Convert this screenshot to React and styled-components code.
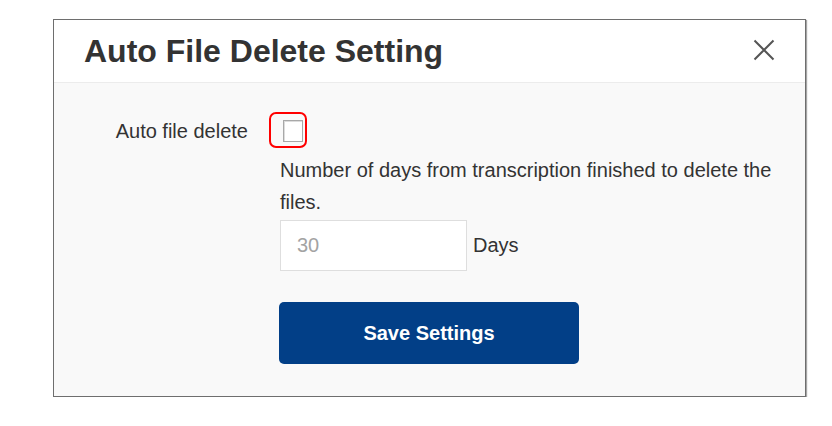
import styled, { createGlobalStyle } from 'styled-components';

const GlobalStyle = createGlobalStyle`
    html, body {
        margin: 0;
        padding: 0;
        background: #ffffff;
        font-family: "Liberation Sans", Arial, sans-serif;
    }
`;

const App = () => {
    return (
        <>
            <GlobalStyle />
            <StyledDialog>
                <StyledHeader>
                    <StyledTitle>Auto File Delete Setting</StyledTitle>
                    <StyledClose aria-label="close">
                        <svg width="22" height="22" viewBox="0 0 22 22">
                            <path d="M1.5 1.5 L20.5 20.5 M20.5 1.5 L1.5 20.5" stroke="#555" strokeWidth="2" fill="none" />
                        </svg>
                    </StyledClose>
                </StyledHeader>

                <StyledBody>
                    <StyledLabel>Auto file delete</StyledLabel>
                    <StyledField>
                        <StyledCheckRow>
                            <StyledCheckbox />
                            <StyledHighlight />
                        </StyledCheckRow>
                        <StyledHelp>
                            Number of days from transcription finished to delete the files.
                        </StyledHelp>
                        <StyledInputRow>
                            <StyledInput>30</StyledInput>
                            <StyledUnit>Days</StyledUnit>
                        </StyledInputRow>
                        <StyledSaveButton>Save Settings</StyledSaveButton>
                    </StyledField>
                </StyledBody>
            </StyledDialog>
        </>
    );
};

export default App;

const StyledDialog = styled.div`
    box-sizing: border-box;
    width: 753px;
    margin: 19px 0 0 53px;
    border: 1px solid #6e6e6e;
    box-shadow: 1px 1px 1px rgba(0, 0, 0, 0.35);
    background: #f9f9f9;
`;

const StyledHeader = styled.div`
    height: 62px;
    display: flex;
    align-items: center;
    justify-content: space-between;
    padding: 0 30px;
    background: #ffffff;
    border-bottom: 1px solid #ececec;
`;

const StyledTitle = styled.h2`
    margin: 0;
    font-size: 32px;
    font-weight: 700;
    line-height: 36px;
    color: #333333;
`;

const StyledClose = styled.span`
    display: flex;
    width: 22px;
    height: 22px;
    margin-top: -2px;
`;

const StyledBody = styled.div`
    display: grid;
    grid-template-columns: 226px 1fr;
    padding: 30px 30px 32px 0;
    color: #333333;
    font-size: 20px;
`;

const StyledLabel = styled.div`
    height: 36px;
    line-height: 36px;
    text-align: right;
    padding-right: 32px;
`;

const StyledField = styled.div`
    display: flex;
    flex-direction: column;
    align-items: flex-start;
`;

const StyledCheckRow = styled.div`
    position: relative;
    height: 36px;
    display: flex;
    align-items: center;
`;

const StyledCheckbox = styled.span`
    box-sizing: border-box;
    width: 20px;
    height: 22px;
    margin-left: 3px;
    margin-top: -1px;
    background: #ffffff;
    border: 1px solid #a8a8a8;
    box-shadow: inset 1px 1px 0 #dcdcdc;
`;

// annotation ring drawn over the checkbox
const StyledHighlight = styled.span`
    position: absolute;
    left: -11px;
    top: -1px;
    width: 38px;
    height: 36px;
    box-sizing: border-box;
    border: 2px solid #ff0000;
    border-radius: 7px;
`;

const StyledHelp = styled.p`
    margin: 5px 0 0;
    line-height: 32px;
`;

const StyledInputRow = styled.div`
    display: flex;
    align-items: center;
    gap: 6px;
    margin-top: 2px;
`;

const StyledInput = styled.div`
    box-sizing: border-box;
    width: 187px;
    height: 51px;
    padding-left: 16px;
    display: flex;
    align-items: center;
    background: #ffffff;
    border: 1px solid #dedede;
    color: #a3a3a3;
`;

const StyledUnit = styled.span`
    color: #333333;
`;

const StyledSaveButton = styled.button`
    width: 300px;
    height: 62px;
    margin: 31px 0 0 -1px;
    border: none;
    border-radius: 5px;
    background: #023f87;
    color: #ffffff;
    font-family: "Liberation Sans", Arial, sans-serif;
    font-size: 20px;
    font-weight: 700;
`;
